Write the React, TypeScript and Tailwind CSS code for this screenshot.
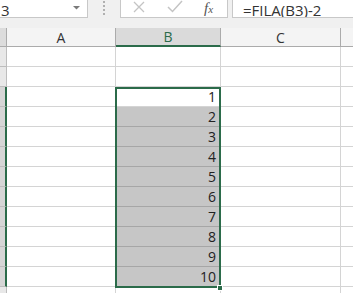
import React from 'react';

const GREEN = '#2b6b4a';

const cols = ['A', 'B', 'C'];

export default function App() {
  const rows = Array.from({ length: 13 }, (_, i) => i + 1);

  return (
    <div className="w-[353px] h-[293px] overflow-hidden bg-white" style={{ fontFamily: '"Open Sans", "Liberation Sans", sans-serif' }}>
      {/* Formula bar */}
      <div className="h-[28px] bg-[#f0f0f0] flex items-start">
        <div className="w-[88px] h-[18px] bg-white border-b border-r border-[#c8c8c8] flex items-end justify-between pl-[1px] pr-[6px] overflow-hidden">
          <span className="text-[15px] leading-none text-[#333] -mb-[1px]">3</span>
          <svg width="9" height="6" viewBox="0 0 9 6" className="mb-[6px]">
            <path d="M1 1 L4.5 4.5 L8 1 Z" fill="#7a7a7a" />
          </svg>
        </div>
        <div className="w-[32px] h-[18px] flex justify-center pt-[1px]">
          <div className="flex flex-col gap-[2px]">
            <span className="w-[2px] h-[2px] bg-[#b0b0b0]" />
            <span className="w-[2px] h-[2px] bg-[#b0b0b0]" />
            <span className="w-[2px] h-[2px] bg-[#b0b0b0]" />
            <span className="w-[2px] h-[2px] bg-[#b0b0b0]" />
          </div>
        </div>
        <div className="w-[108px] h-[18px] bg-white border-b border-x border-[#c8c8c8] relative overflow-hidden">
          <svg width="12" height="12" viewBox="0 0 12 12" className="absolute left-[12px] top-[1px]">
            <path d="M1 1 L11 11 M11 1 L1 11" stroke="#c4c4c4" strokeWidth="1.3" />
          </svg>
          <svg width="16" height="13" viewBox="0 0 16 13" className="absolute left-[46px] top-[0px]">
            <path d="M1 7 L5.5 11.5 L15 1" stroke="#c4c4c4" strokeWidth="1.5" fill="none" />
          </svg>
          <span className="absolute left-[83px] -top-[3px] text-[15px] italic text-[#555]" style={{ fontFamily: '"Liberation Serif", serif' }}>
            f<span className="text-[11px]">x</span>
          </span>
        </div>
        <div className="w-[4px]" />
        <div className="flex-1 h-[18px] bg-white border-b border-l border-[#c8c8c8] flex items-end pl-[10px] overflow-hidden">
          <span className="text-[15px] leading-none text-[#333] -mb-[1px]">=FILA(B3)-2</span>
        </div>
      </div>

      {/* Sheet */}
      <div className="relative">
        <div className="grid grid-cols-[7px_109px_105px_120px_1fr] grid-rows-[19px_repeat(13,20px)]">
          {/* Header row */}
          <div className="bg-[#dcdcdc] border-r border-b border-[#ababab]" />
          {cols.map((c) => (
            <div
              key={c}
              className={
                c === 'B'
                  ? 'bg-[#dadada] border-r border-[#ababab] border-b-2 border-b-[#2b6b4a] flex items-center justify-center text-[14px] text-[#2b6b4a]'
                  : 'bg-[#f4f4f4] border-r border-b border-[#ababab] flex items-center justify-center text-[14px] text-[#333]'
              }
            >
              {c}
            </div>
          ))}
          <div className="bg-[#f4f4f4] border-b border-[#ababab]" />

          {rows.map((r) => {
            const selected = r >= 3 && r <= 12;
            const value = selected ? r - 2 : null;
            return (
              <React.Fragment key={r}>
                <div
                  className={
                    selected
                      ? 'bg-[#d6d6d6] border-b border-[#bdbdbd] border-r-2 border-r-[#2b6b4a]'
                      : 'bg-[#e8e8e8] border-b border-r border-[#bdbdbd]'
                  }
                />
                <div className="border-r border-b border-[#d4d4d4]" />
                <div
                  className={`border-r border-b flex items-end justify-end pr-[4px] text-[14px] leading-[19px] text-[#222] ${
                    selected && r !== 3 ? 'bg-[#c6c6c6] border-[#a6a6a6]' : 'border-[#d4d4d4]'
                  }`}
                >
                  {value}
                </div>
                <div className="border-r border-b border-[#d4d4d4]" />
                <div className="border-b border-[#d4d4d4]" />
              </React.Fragment>
            );
          })}
        </div>

        {/* Selection outline + fill handle */}
        <div
          className="absolute left-[115px] top-[59px] w-[106px] h-[201px] border-2 pointer-events-none"
          style={{ borderColor: GREEN }}
        />
        <div className="absolute left-[217px] top-[257px] w-[6px] h-[6px] bg-[#2b6b4a] border border-white pointer-events-none" />
      </div>
    </div>
  );
}
